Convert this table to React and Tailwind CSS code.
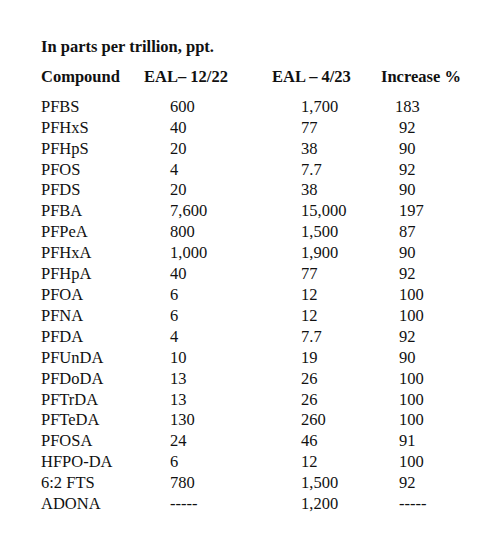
import React from 'react'

const ROWS = [
  ['PFBS', '600', '1,700', '183'],
  ['PFHxS', '40', '77', '92'],
  ['PFHpS', '20', '38', '90'],
  ['PFOS', '4', '7.7', '92'],
  ['PFDS', '20', '38', '90'],
  ['PFBA', '7,600', '15,000', '197'],
  ['PFPeA', '800', '1,500', '87'],
  ['PFHxA', '1,000', '1,900', '90'],
  ['PFHpA', '40', '77', '92'],
  ['PFOA', '6', '12', '100'],
  ['PFNA', '6', '12', '100'],
  ['PFDA', '4', '7.7', '92'],
  ['PFUnDA', '10', '19', '90'],
  ['PFDoDA', '13', '26', '100'],
  ['PFTrDA', '13', '26', '100'],
  ['PFTeDA', '130', '260', '100'],
  ['PFOSA', '24', '46', '91'],
  ['HFPO-DA', '6', '12', '100'],
  ['6:2 FTS', '780', '1,500', '92'],
  ['ADONA', '-----', '1,200', '-----'],
]

export default function App() {
  return (
    <div className="w-[500px] h-[537px] bg-white text-[#111] font-['Liberation_Serif',serif] text-[16.5px] leading-[20.9px] pl-[41px] pt-[37px]">
      {/* Title */}
      <p className="font-bold">In parts per trillion, ppt.</p>

      {/* Header */}
      <div className="grid grid-cols-[103px_128px_109px_1fr] font-bold mt-[9px] whitespace-nowrap">
        <span>Compound</span>
        <span>EAL– 12/22</span>
        <span>EAL – 4/23</span>
        <span>Increase %</span>
      </div>

      {/* Data rows */}
      <div className="mt-[9px]">
        {ROWS.map((r, i) => (
          <div key={r[0]} className="grid grid-cols-[103px_128px_109px_1fr] whitespace-nowrap">
            <span>{r[0]}</span>
            <span className="pl-[26px]">{r[1]}</span>
            <span className="pl-[29px]">{r[2]}</span>
            <span className={i === 0 ? 'pl-[14px]' : 'pl-[18px]'}>{r[3]}</span>
          </div>
        ))}
      </div>
    </div>
  )
}
